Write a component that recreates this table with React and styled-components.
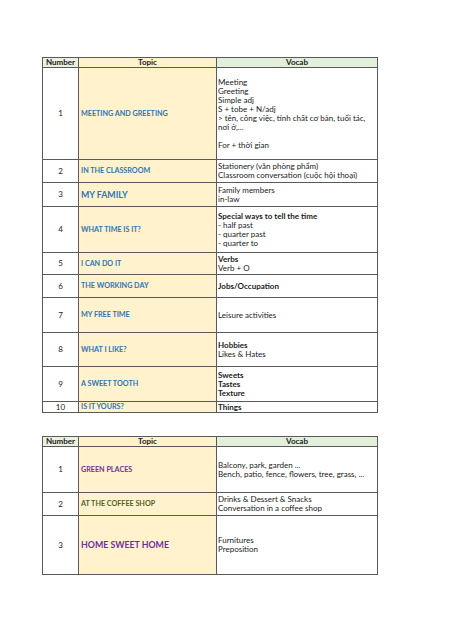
import React from "react";
import styled, { createGlobalStyle } from "styled-components";

const GlobalStyle = createGlobalStyle`
  body {
    margin: 0;
    background: #ffffff;
    font-family: "Lato", "Liberation Sans", sans-serif;
  }
`;

const Page = styled.div`
  padding: 57px 0 0 42px;
  display: flex;
  flex-direction: column;
  gap: 23px;
`;

const Table = styled.table`
  border-collapse: collapse;
  table-layout: fixed;
  width: 335px;
  font-size: 8px;
  color: #1a1a1a;
`;

const HeadCell = styled.th`
  height: 9px;
  padding: 0;
  border: 1px solid #5a5a5a;
  background: ${(p) => p.$bg};
  font-weight: 700;
  font-size: 8px;
  line-height: 9px;
  text-align: center;
`;

const NumCell = styled.td`
  padding: 0;
  border: 1px solid #5a5a5a;
  text-align: center;
  vertical-align: middle;
  line-height: 9px;
`;

const TopicCell = styled.td`
  padding: 0 2px;
  border: 1px solid #5a5a5a;
  background: #fff2cc;
  vertical-align: middle;
  font-weight: 700;
  color: ${(p) => p.$color || "#2e75b6"};
  font-size: ${(p) => p.$size || 7.2}px;
  line-height: 10px;
  white-space: nowrap;
`;

const VocabCell = styled.td`
  padding: 0 1px;
  border: 1px solid #5a5a5a;
  vertical-align: middle;
  line-height: 9px;
  white-space: nowrap;
`;

const Line = styled.div`
  font-weight: ${(p) => (p.$bold ? 700 : 400)};
  min-height: 9px;
`;

const first = [
  {
    n: 1,
    h: 92,
    topic: "MEETING AND GREETING",
    lines: [
      ["Meeting"],
      ["Greeting"],
      ["Simple adj"],
      ["S + tobe + N/adj"],
      ["> tên, công việc, tính chất cơ bản, tuổi tác,"],
      ["nơi ở,..."],
      [""],
      ["For + thời gian"],
    ],
  },
  {
    n: 2,
    h: 23,
    topic: "IN THE CLASSROOM",
    lines: [["Stationery (văn phòng phẩm)"], ["Classroom conversation (cuộc hội thoại)"]],
  },
  { n: 3, h: 24, topic: "MY FAMILY", size: 8.8, lines: [["Family members"], ["in-law"]] },
  {
    n: 4,
    h: 46,
    topic: "WHAT TIME IS IT?",
    lines: [["Special ways to tell the time", true], ["- half past"], ["- quarter past"], ["- quarter to"]],
  },
  { n: 5, h: 22, topic: "I CAN DO IT", lines: [["Verbs", true], ["Verb + O"]] },
  { n: 6, h: 23, topic: "THE WORKING DAY", lines: [["Jobs/Occupation", true]] },
  { n: 7, h: 35, topic: "MY FREE TIME", lines: [["Leisure activities"]] },
  { n: 8, h: 34, topic: "WHAT I LIKE?", lines: [["Hobbies", true], ["Likes & Hates"]] },
  {
    n: 9,
    h: 35,
    topic: "A SWEET TOOTH",
    lines: [["Sweets", true], ["Tastes", true], ["Texture", true]],
  },
  { n: 10, h: 11, topic: "IS IT YOURS?", lines: [["Things", true]] },
];

const second = [
  {
    n: 1,
    h: 46,
    topic: "GREEN PLACES",
    color: "#7030a0",
    lines: [["Balcony, park, garden ..."], ["Bench, patio, fence, flowers, tree, grass, ..."]],
  },
  {
    n: 2,
    h: 23,
    topic: "AT THE COFFEE SHOP",
    color: "#4f6228",
    lines: [["Drinks & Dessert & Snacks"], ["Conversation in a coffee shop"]],
  },
  {
    n: 3,
    h: 59,
    topic: "HOME SWEET HOME",
    color: "#7030a0",
    size: 8.8,
    lines: [["Furnitures"], ["Preposition"]],
  },
];

const Sheet = ({ rows }) => (
  <Table>
    <colgroup>
      <col style={{ width: 36 }} />
      <col style={{ width: 138 }} />
      <col style={{ width: 161 }} />
    </colgroup>
    <thead>
      <tr>
        <HeadCell $bg="#ebf1de">Number</HeadCell>
        <HeadCell $bg="#fff2cc">Topic</HeadCell>
        <HeadCell $bg="#e2efda">Vocab</HeadCell>
      </tr>
    </thead>
    <tbody>
      {rows.map((r) => (
        <tr key={r.n} style={{ height: r.h }}>
          <NumCell>{r.n}</NumCell>
          <TopicCell $color={r.color} $size={r.size}>
            {r.topic}
          </TopicCell>
          <VocabCell>
            {r.lines.map(([text, bold], i) => (
              <Line key={i} $bold={bold}>
                {text}
              </Line>
            ))}
          </VocabCell>
        </tr>
      ))}
    </tbody>
  </Table>
);

export default function App() {
  return (
    <>
      <GlobalStyle />
      <Page>
        <Sheet rows={first} />
        <Sheet rows={second} />
      </Page>
    </>
  );
}
